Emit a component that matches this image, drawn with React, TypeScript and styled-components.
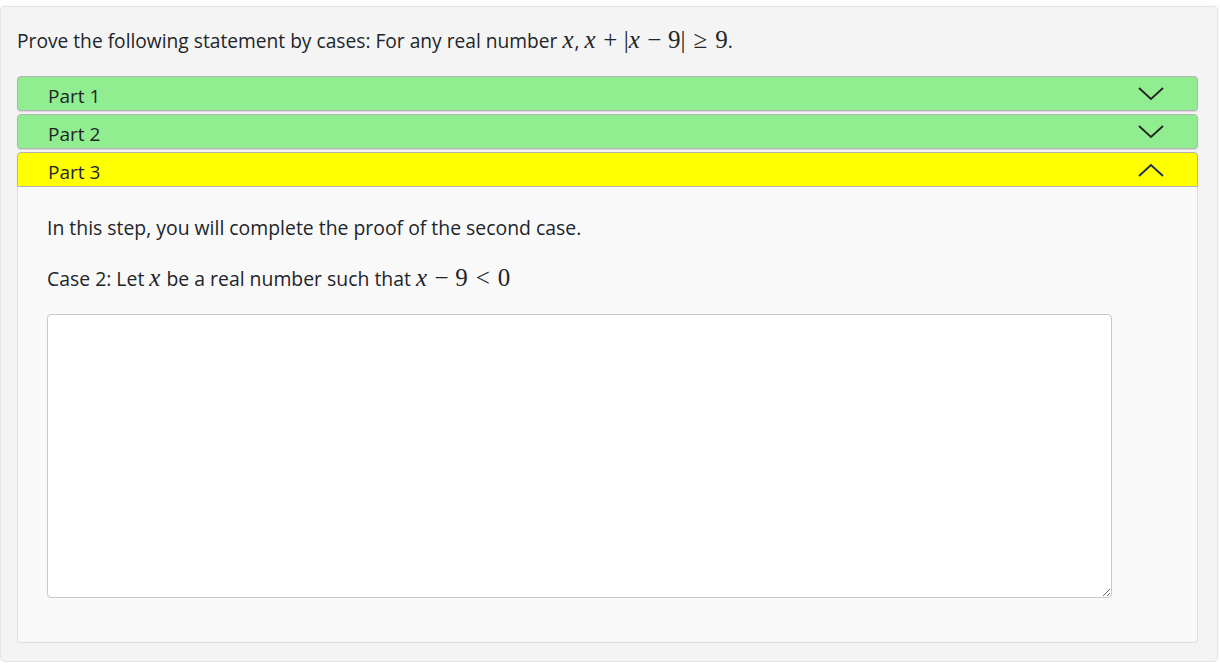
import React from "react";
import styled, { createGlobalStyle } from "styled-components";

const Global = createGlobalStyle`
  html, body { margin: 0; padding: 0; background: #ffffff; }
  body { font-family: "Segoe UI", "Open Sans", "Noto Sans", sans-serif; color: #212529; }
  * { box-sizing: border-box; }
`;

const Page = styled.div`
  padding-top: 6px;
  width: 1220px;
`;

const Card = styled.div`
  width: 1218px;
  background: #f4f4f4;
  border: 1px solid #e4e4e4;
  border-radius: 5px;
  box-shadow: 0 0 3px rgba(0, 0, 0, 0.08);
  padding: 19px 19px 18px 16px;
`;

const Title = styled.p`
  margin: 0 0 20px 0;
  font-size: 19.2px;
  line-height: 30px;
  height: 30px;
  color: #212529;
`;

const M = styled.span`
  font-family: "Liberation Serif", "DejaVu Serif", serif;
  font-size: 25px;
  line-height: 1;
`;
const MI = styled(M)`
  font-style: italic;
  padding-right: 1px;
`;
const Bin = styled(M)`
  margin: 0 6.5px;
`;
const Rel = styled(M)`
  margin: 0 8px;
`;

const Accordion = styled.div`
  display: flex;
  flex-direction: column;
  gap: 3px;
  width: 1181px;
`;

const Item = styled.div``;

const Header = styled.div<{ $bg: string; $open?: boolean }>`
  height: 35px;
  display: flex;
  align-items: center;
  justify-content: space-between;
  padding: 0 33px 0 30px;
  background: ${(p) => p.$bg};
  border: 1px solid #b3b3b3;
  border-radius: ${(p) => (p.$open ? "4px 4px 0 0" : "4px")};
  box-shadow: 0 1px 1px rgba(0, 0, 0, 0.12);
  font-size: 19px;
  color: #212529;
`;

const Label = styled.span`
  padding-top: 4px;
`;

const Body = styled.div`
  background: #f9f9f9;
  border: 1px solid #dddddd;
  border-top: none;
  border-radius: 0 0 4px 4px;
  padding: 27px 30px 44px 29px;
`;

const Para = styled.p<{ $mb: number }>`
  margin: 0 0 ${(p) => p.$mb}px 0;
  font-size: 19.4px;
  line-height: 28px;
  height: 28px;
  color: #212529;
`;

const TextArea = styled.textarea`
  display: block;
  width: 1065px;
  height: 284px;
  background: #ffffff;
  border: 1px solid #c8c8c8;
  border-radius: 4px;
  resize: both;
  outline: none;
  font-family: inherit;
`;

const Chevron = ({ up }: { up?: boolean }) => (
  <svg width="26" height="14" viewBox="0 0 26 14">
    <polyline
      points={up ? "1,13 13,2 25,13" : "1,1 13,12 25,1"}
      fill="none"
      stroke={up ? "#1c2a5e" : "#222"}
      strokeWidth="1.8"
    />
  </svg>
);

export default function App() {
  return (
    <>
      <Global />
      <Page>
        <Card>
          <Title>
            Prove the following statement by cases: For any real number <MI>x</MI>, <MI>x</MI>
            <Bin>+</Bin>
            <M>|</M>
            <MI>x</MI>
            <Bin>−</Bin>
            <M>9|</M>
            <Rel>≥</Rel>
            <M>9</M>.
          </Title>
          <Accordion>
            <Item>
              <Header $bg="#90ee90">
                <Label>Part 1</Label>
                <Chevron />
              </Header>
            </Item>
            <Item>
              <Header $bg="#90ee90">
                <Label>Part 2</Label>
                <Chevron />
              </Header>
            </Item>
            <Item>
              <Header $bg="#ffff00" $open>
                <Label>Part 3</Label>
                <Chevron up />
              </Header>
              <Body>
                <Para $mb={23}>In this step, you will complete the proof of the second case.</Para>
                <Para $mb={21}>
                  Case 2: Let <MI>x</MI> be a real number such that <MI>x</MI>
                  <Bin>−</Bin>
                  <M>9</M>
                  <Rel>&lt;</Rel>
                  <M>0</M>
                </Para>
                <TextArea />
              </Body>
            </Item>
          </Accordion>
        </Card>
      </Page>
    </>
  );
}
